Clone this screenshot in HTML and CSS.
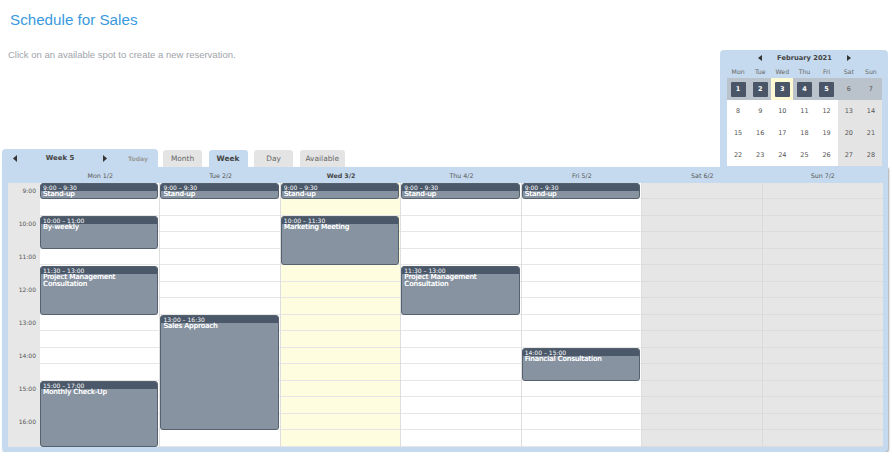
FILE: index.html
```html
<!DOCTYPE html>
<html lang="en">
<head>
<meta charset="UTF-8">
<title>Schedule for Sales</title>
<link rel="stylesheet" href="styles.css">
</head>
<body>

<h1 class="title">Schedule for Sales</h1>

<section class="top">
  <div class="top-left">
    <p class="hint">Click on an available spot to create a new reservation.</p>
    <div class="toolbar">
      <div class="nav">
        <span class="arrow"><svg width="4" height="7" viewBox="0 0 4 7"><path d="M4 0V7L0 3.5Z" fill="#333"/></svg></span>
        <span class="label">Week 5</span>
        <span class="arrow"><svg width="4" height="7" viewBox="0 0 4 7"><path d="M0 0V7L4 3.5Z" fill="#333"/></svg></span>
        <span class="today">Today</span>
      </div>
      <div class="tab">Month</div>
      <div class="tab active">Week</div>
      <div class="tab">Day</div>
      <div class="tab">Available</div>
    </div>
  </div>

  <div class="mini">
    <div class="mini-head">
      <svg width="4" height="6" viewBox="0 0 4 6"><path d="M4 0V6L0 3Z" fill="#333"/></svg>
      <span class="mini-title">February 2021</span>
      <svg width="4" height="6" viewBox="0 0 4 6"><path d="M0 0V6L4 3Z" fill="#333"/></svg>
    </div>
    <div class="mini-grid">
      <div class="wd">Mon</div><div class="wd">Tue</div><div class="wd">Wed</div><div class="wd">Thu</div><div class="wd">Fri</div><div class="wd">Sat</div><div class="wd">Sun</div>

      <div class="d cur"><span class="sel">1</span></div>
      <div class="d cur"><span class="sel">2</span></div>
      <div class="d today"><span class="sel">3</span></div>
      <div class="d cur"><span class="sel">4</span></div>
      <div class="d cur"><span class="sel">5</span></div>
      <div class="d cur">6</div>
      <div class="d cur">7</div>

      <div class="d">8</div><div class="d">9</div><div class="d">10</div><div class="d">11</div><div class="d">12</div><div class="d we">13</div><div class="d we">14</div>
      <div class="d">15</div><div class="d">16</div><div class="d">17</div><div class="d">18</div><div class="d">19</div><div class="d we">20</div><div class="d we">21</div>
      <div class="d">22</div><div class="d">23</div><div class="d">24</div><div class="d">25</div><div class="d">26</div><div class="d we">27</div><div class="d we">28</div>
    </div>
  </div>
</section>

<main class="cal">
  <div class="cal-head">
    <div></div>
    <div>Mon 1/2</div>
    <div>Tue 2/2</div>
    <div class="now">Wed 3/2</div>
    <div>Thu 4/2</div>
    <div>Fri 5/2</div>
    <div>Sat 6/2</div>
    <div>Sun 7/2</div>
  </div>

  <div class="cal-body">
    <div class="times">
      <div class="hour">9:00</div>
      <div class="hour">10:00</div>
      <div class="hour">11:00</div>
      <div class="hour">12:00</div>
      <div class="hour">13:00</div>
      <div class="hour">14:00</div>
      <div class="hour">15:00</div>
      <div class="hour">16:00</div>
    </div>

    <!-- rows are half hours from 9:00 -->
    <div class="day">
      <div class="event" style="grid-row:1 / span 1"><span class="time">9:00 – 9:30</span><span class="name">Stand-up</span></div>
      <div class="event" style="grid-row:3 / span 2"><span class="time">10:00 – 11:00</span><span class="name">By-weekly</span></div>
      <div class="event" style="grid-row:6 / span 3"><span class="time">11:30 – 13:00</span><span class="name">Project Management Consultation</span></div>
      <div class="event" style="grid-row:13 / span 4"><span class="time">15:00 – 17:00</span><span class="name">Monthly Check-Up</span></div>
    </div>
    <div class="day">
      <div class="event" style="grid-row:1 / span 1"><span class="time">9:00 – 9:30</span><span class="name">Stand-up</span></div>
      <div class="event" style="grid-row:9 / span 7"><span class="time">13:00 – 16:30</span><span class="name">Sales Approach</span></div>
    </div>
    <div class="day now">
      <div class="event" style="grid-row:1 / span 1"><span class="time">9:00 – 9:30</span><span class="name">Stand-up</span></div>
      <div class="event" style="grid-row:3 / span 3"><span class="time">10:00 – 11:30</span><span class="name">Marketing Meeting</span></div>
    </div>
    <div class="day">
      <div class="event" style="grid-row:1 / span 1"><span class="time">9:00 – 9:30</span><span class="name">Stand-up</span></div>
      <div class="event" style="grid-row:6 / span 3"><span class="time">11:30 – 13:00</span><span class="name">Project Management Consultation</span></div>
    </div>
    <div class="day">
      <div class="event" style="grid-row:1 / span 1"><span class="time">9:00 – 9:30</span><span class="name">Stand-up</span></div>
      <div class="event" style="grid-row:11 / span 2"><span class="time">14:00 – 15:00</span><span class="name">Financial Consultation</span></div>
    </div>
    <div class="day weekend"></div>
    <div class="day weekend last"></div>
  </div>
</main>

</body>
</html>
```

FILE: styles.css
```css
html,body{
  margin:0;
  padding:0;
  background:#fff;
}
body{
  font-family:"DejaVu Sans",Verdana,sans-serif;
  font-size:7px;
  color:#555;
}

/* ----------  HEADING  ---------- */
.title{
  margin:11px 0 0 10px;
  font:15.2px/18px "Liberation Sans",Arial,sans-serif;
  font-weight:normal;
  color:#3a99de;
}

.top{
  display:flex;
  margin:21px 4px 0 2px;
}
.top-left{
  flex:1;
  display:flex;
  flex-direction:column;
  justify-content:space-between;
}
.hint{
  margin:-2px 0 0 6px;
  font:9.5px/13px "Liberation Sans",Arial,sans-serif;
  color:#a0a4aa;
}

/* ----------  TOOLBAR  ---------- */
.toolbar{
  display:flex;
  align-items:flex-end;
  gap:6.5px;
  height:18px;
}
.nav{
  display:grid;
  grid-template-columns:26px 64px 26px 40px;
  align-items:center;
  height:18px;
  margin-right:-1.5px;
  background:#c5daee;
  border-radius:4px 4px 0 0;
}
.nav .arrow{display:flex;justify-content:center;}
.nav .label{
  text-align:center;
  font-weight:bold;
  font-size:6.9px;
  color:#444;
}
.nav .today{
  text-align:center;
  font-weight:bold;
  font-size:6.1px;
  color:#9a9a9a;
}
.tab{
  min-width:39px;
  box-sizing:border-box;
  height:17px;
  padding:0 6px;
  display:flex;
  align-items:center;
  justify-content:center;
  background:#e4e4e4;
  color:#666;
  font-size:7.4px;
  border-radius:3px 3px 0 0;
}
.tab.active{
  background:#c5daee;
  color:#444;
  font-weight:bold;
}

/* ----------  MINI CALENDAR  ---------- */
.mini{
  width:168px;
  height:117px;
  box-sizing:border-box;
  padding:0 6px 0 7px;
  background:#c5daee;
  border-radius:4px 4px 0 0;
}
.mini-head{
  height:16px;
  display:flex;
  align-items:center;
  justify-content:center;
  gap:2.5px;
}
.mini-title{
  width:80px;
  text-align:center;
  font-weight:bold;
  font-size:6.7px;
  color:#444;
}
.mini-grid{
  display:grid;
  grid-template-columns:repeat(7,1fr);
}
.wd{
  height:12px;
  line-height:12px;
  text-align:center;
  font-size:6.2px;
  color:#666;
}
.d{
  height:22px;
  display:flex;
  align-items:center;
  justify-content:center;
  background:#fff;
  font-size:6.5px;
  color:#555;
}
.d.we{background:#e4e4e4;}
.d.cur{background:#bac3cc;}
.d.today{background:#fdf9d2;}
.d .sel{
  width:15px;
  height:15px;
  display:flex;
  align-items:center;
  justify-content:center;
  background:#4a5667;
  color:#fff;
  font-weight:bold;
  border-radius:1px;
}

/* ----------  WEEK GRID  ---------- */
.cal{
  margin:0 4px 0 2px;
  padding:0 5px 5px 6px;
  background:#c5daee;
  border-radius:0 0 4px 4px;
  box-shadow:1px 1px 2px rgba(0,0,0,.35);
}
.cal-head{
  display:grid;
  grid-template-columns:32px repeat(7,1fr);
  height:16px;
  align-items:center;
}
.cal-head div{
  text-align:center;
  font-size:6.3px;
  color:#555;
}
.cal-head .now{font-weight:bold;color:#444;}

.cal-body{
  display:grid;
  grid-template-columns:32px repeat(7,1fr);
}
.times{background:#e7e7e7;}
.hour{
  height:33px;
  padding-right:4px;
  text-align:right;
  line-height:16.5px;
  font-size:6px;
  color:#555;
}

.day{
  display:grid;
  grid-template-rows:repeat(16,16.5px);
  border-right:1px solid #dedede;
  background:#fff repeating-linear-gradient(to bottom,transparent 0,transparent 15.5px,#e6e6e6 15.5px,#e6e6e6 16.5px);
}
.day.now{background-color:#fffde0;}
.day.weekend{
  background:#e6e6e6 repeating-linear-gradient(to bottom,transparent 0,transparent 15.5px,#dcdcdc 15.5px,#dcdcdc 16.5px);
  border-right-color:#dadada;
}
.day.last{border-right:0;}

.event{
  display:flex;
  flex-direction:column;
  margin:0 1px .5px 0;
  border:1px solid #56616e;
  border-radius:3px;
  background:#8793a1;
  color:#fff;
  overflow:hidden;
}
.event .time{
  flex:none;
  height:7px;
  padding:0 2px;
  line-height:7px;
  font-size:6px;
  background:#4b5869;
}
.event .name{
  padding:0 2px;
  line-height:7.5px;
  font-size:7px;
  text-shadow:.3px 0 0 #fff;
}
```
